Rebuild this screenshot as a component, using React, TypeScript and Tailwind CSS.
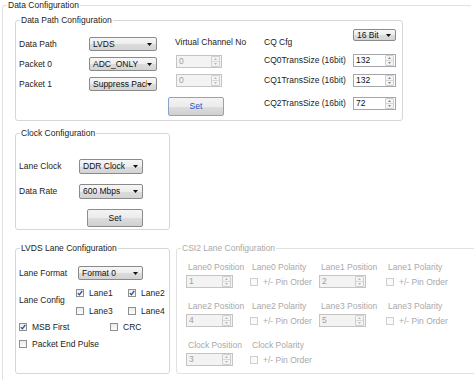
import React from 'react';

// Windows-style "Data Configuration" panel, scaled down
const FONT = "font-['Liberation_Sans',Arial,sans-serif]";

interface BoxProps {
  title: string;
  className?: string;
  children?: React.ReactNode;
}

const GroupBox: React.FC<BoxProps> = ({ title, className = '', children }) => (
  <fieldset className={`min-w-0 shrink-0 rounded-[3px] border ${className}`}>
    <legend className="ml-[4px] px-[1px] leading-[10px] whitespace-nowrap">{title}</legend>
    {children}
  </fieldset>
);

const Arrow = () => (
  <svg width="5" height="3" viewBox="0 0 5 3" className="shrink-0">
    <path d="M0 0 H5 L2.5 3 Z" fill="#111" />
  </svg>
);

const Combo: React.FC<{ value: string; w: string; h: string }> = ({ value, w, h }) => (
  <div
    className={`${w} ${h} shrink-0 flex items-center justify-between rounded-[2px] border border-[#8a8a8a] bg-[linear-gradient(#f7f7f7_0%,#ececec_50%,#dcdcdc_51%,#d4d4d4_100%)] pl-[3px] pr-[4px] text-[#111] overflow-hidden`}
  >
    <span className="whitespace-nowrap overflow-hidden">{value}</span>
    <Arrow />
  </div>
);

const SpinArrows: React.FC<{ disabled?: boolean }> = ({ disabled }) => {
  const c = disabled ? '#b8b8b8' : '#8a8a8a';
  return (
    <div className="ml-auto mr-px flex h-[11px] w-[9px] flex-col self-center rounded-[1px] border border-[#d0d0d0] bg-[#f4f4f4]">
      <div className="flex flex-1 items-center justify-center border-b border-[#d8d8d8]">
        <svg width="3" height="2" viewBox="0 0 3 2"><path d="M0 2 L1.5 0 L3 2 Z" fill={c} /></svg>
      </div>
      <div className="flex flex-1 items-center justify-center">
        <svg width="3" height="2" viewBox="0 0 3 2"><path d="M0 0 H3 L1.5 2 Z" fill={c} /></svg>
      </div>
    </div>
  );
};

const Spin: React.FC<{ value: string; w: string; disabled?: boolean; className?: string }> = ({
  value,
  w,
  disabled,
  className = '',
}) => (
  <div
    className={`${w} h-[13px] shrink-0 flex items-stretch border ${
      disabled ? 'border-[#c4c4c4] bg-[#f3f3f3] text-[#a0a0a0]' : 'border-[#a3a6ad] bg-white text-[#111]'
    } ${className}`}
  >
    <span className="pl-[2px] leading-[11px]">{value}</span>
    <SpinArrows disabled={disabled} />
  </div>
);

const Check: React.FC<{ checked?: boolean; disabled?: boolean }> = ({ checked, disabled }) => (
  <div
    className={`h-[8px] w-[8px] shrink-0 flex items-center justify-center border ${
      disabled ? 'border-[#cfcfcf] bg-[#fafafa]' : 'border-[#8e8f8f] bg-[linear-gradient(#ebebeb,#fdfdfd)]'
    }`}
  >
    {checked && (
      <svg width="6" height="6" viewBox="0 0 6 6">
        <path d="M0.8 3.2 L2.4 4.8 L5.2 1" stroke="#3b4f8a" strokeWidth="1.3" fill="none" />
      </svg>
    )}
  </div>
);

const CheckItem: React.FC<{ label: string; checked?: boolean; disabled?: boolean; className?: string }> = ({
  label,
  checked,
  disabled,
  className = '',
}) => (
  <div className={`flex h-[10px] items-center ${className}`}>
    <Check checked={checked} disabled={disabled} />
    <span className="ml-[5px] whitespace-nowrap leading-[10px]">{label}</span>
  </div>
);

const Button: React.FC<{ label: string; w: string; h: string; blue?: boolean; className?: string }> = ({
  label,
  w,
  h,
  blue,
  className = '',
}) => (
  <div
    className={`${w} ${h} shrink-0 flex items-center justify-center rounded-[2px] border ${
      blue ? 'border-[#8aa4c4] text-[#2a55c8]' : 'border-[#8c8c8c] text-[#111]'
    } bg-[linear-gradient(#f4f4f4_0%,#ebebeb_50%,#dddddd_51%,#d0d0d0_100%)] ${className}`}
  >
    {label}
  </div>
);

const PosCell: React.FC<{ label: string; value: string }> = ({ label, value }) => (
  <div className="flex flex-col">
    <span className="h-[10px] pl-[2px] leading-[10px] whitespace-nowrap">{label}</span>
    <Spin value={value} w="w-[47px]" disabled className="mt-[3px]" />
  </div>
);

const PolCell: React.FC<{ label: string }> = ({ label }) => (
  <div className="flex flex-col">
    <span className="h-[10px] pl-[2px] leading-[10px] whitespace-nowrap">{label}</span>
    <div className="mt-[3px] flex h-[13px] items-center">
      <CheckItem label="+/- Pin Order" disabled />
    </div>
  </div>
);

export default function App() {
  return (
    <div className={`h-[380px] w-[474px] overflow-hidden bg-white text-[8.5px] text-[#1c1c1c] ${FONT}`}>
      <GroupBox title="Data Configuration" className="ml-[2px] h-[420px] w-[470px] border-[#e2e2e2] border-r-transparent">
        <div className="pl-[12px] pt-[5px]">
          {/* Data path */}
          <GroupBox title="Data Path Configuration" className="h-[106px] w-[388px] border-[#d6d6d6]">
            <div className="flex pl-[3px]">
              <div className="mt-[12px] flex flex-col gap-[6px]">
                {[
                  ['Data Path', 'LVDS'],
                  ['Packet 0', 'ADC_ONLY'],
                  ['Packet 1', 'Suppress Packet'],
                ].map(([l, v]) => (
                  <div key={l} className="flex h-[14px] items-center">
                    <span className="w-[70px] shrink-0">{l}</span>
                    <Combo value={v} w="w-[68px]" h="h-[14px]" />
                  </div>
                ))}
              </div>

              <div className="ml-[11px] mt-[12px] flex w-[56px] shrink-0 flex-col">
                <span className="h-[10px] pl-[7px] leading-[10px] whitespace-nowrap">Virtual Channel No</span>
                <Spin value="0" w="w-[46px]" disabled className="ml-[8px] mt-[8px]" />
                <Spin value="0" w="w-[46px]" disabled className="ml-[8px] mt-[6px]" />
                <Button label="Set" w="w-[56px]" h="h-[19px]" blue className="mt-[10px]" />
              </div>

              <div className="ml-[40px] flex flex-col">
                <div className="flex">
                  <span className="mt-[12px] w-[89px] shrink-0 leading-[10px]">CQ Cfg</span>
                  <div className="mt-[4px]">
                    <Combo value="16 Bit" w="w-[43px]" h="h-[12px]" />
                  </div>
                </div>
                {[
                  ['CQ0TransSize (16bit)', '132', 'mt-[7px]'],
                  ['CQ1TransSize (16bit)', '132', 'mt-[7px]'],
                  ['CQ2TransSize (16bit)', '72', 'mt-[10px]'],
                ].map(([l, v, m]) => (
                  <div key={l} className={`flex h-[13px] items-center ${m}`}>
                    <span className="w-[89px] shrink-0 whitespace-nowrap">{l}</span>
                    <Spin value={v} w="w-[43px]" />
                  </div>
                ))}
              </div>
            </div>
          </GroupBox>

          {/* Clock */}
          <GroupBox title="Clock Configuration" className="mt-[7px] h-[102px] w-[155px] border-[#d6d6d6]">
            <div className="flex flex-col pl-[3px]">
              <div className="mt-[21px] flex h-[15px] items-center">
                <span className="w-[60px] shrink-0">Lane Clock</span>
                <Combo value="DDR Clock" w="w-[64px]" h="h-[15px]" />
              </div>
              <div className="mt-[10px] flex h-[15px] items-center">
                <span className="w-[60px] shrink-0">Data Rate</span>
                <Combo value="600 Mbps" w="w-[64px]" h="h-[15px]" />
              </div>
              <Button label="Set" w="w-[56px]" h="h-[18px]" className="ml-[68px] mt-[10px]" />
            </div>
          </GroupBox>

          <div className="mt-[13px] flex gap-[6px]">
            {/* LVDS */}
            <GroupBox title="LVDS Lane Configuration" className="h-[131px] w-[155px] border-[#d6d6d6]">
              <div className="flex flex-col pl-[3px]">
                <div className="mt-[13px] flex h-[14px] items-center">
                  <span className="w-[59px] shrink-0">Lane Format</span>
                  <Combo value="Format 0" w="w-[65px]" h="h-[14px]" />
                </div>
                <div className="mt-[8px] flex items-center">
                  <span className="mb-[3px] w-[57px] shrink-0">Lane Config</span>
                  <div className="grid shrink-0 grid-cols-[52px_36px] gap-y-[8px]">
                    <CheckItem label="Lane1" checked />
                    <CheckItem label="Lane2" checked />
                    <CheckItem label="Lane3" />
                    <CheckItem label="Lane4" />
                  </div>
                </div>
                <div className="mt-[6px] flex">
                  <CheckItem label="MSB First" checked className="w-[91px] shrink-0" />
                  <CheckItem label="CRC" />
                </div>
                <CheckItem label="Packet End Pulse" className="mt-[7px]" />
              </div>
            </GroupBox>

            {/* CSI2 (disabled) */}
            <GroupBox title="CSI2 Lane Configuration" className="h-[131px] w-[320px] border-[#e2e2e2] text-[#a9a9a9]">
              <div className="mt-[9px] grid grid-cols-[64px_69px_67px_80px] gap-y-[13px] pl-[9px]">
                <PosCell label="Lane0 Position" value="1" />
                <PolCell label="Lane0 Polarity" />
                <PosCell label="Lane1 Position" value="2" />
                <PolCell label="Lane1 Polarity" />
                <PosCell label="Lane2 Position" value="4" />
                <PolCell label="Lane2 Polarity" />
                <PosCell label="Lane3 Position" value="5" />
                <PolCell label="Lane3 Polarity" />
                <PosCell label="Clock Position" value="3" />
                <PolCell label="Clock Polarity" />
              </div>
            </GroupBox>
          </div>
        </div>
      </GroupBox>
    </div>
  );
}
